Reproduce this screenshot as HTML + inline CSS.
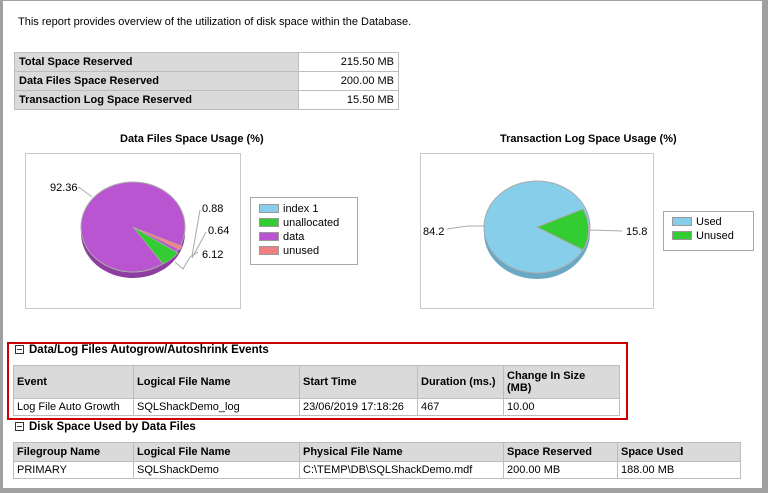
<!DOCTYPE html>
<html><head><meta charset="utf-8"><style>
*{margin:0;padding:0;box-sizing:border-box}
body{width:768px;height:493px;background:#fff;font-family:"Liberation Sans",Arial,sans-serif;font-size:11px;color:#000;position:relative;overflow:hidden}
.frame{position:absolute;left:0;top:0;width:768px;height:493px;border-left:3px solid #a0a0a0;border-top:1px solid #a0a0a0;border-right:6px solid #a0a0a0;border-bottom:5px solid #a0a0a0}
.a{position:absolute;white-space:nowrap}
table{position:absolute;border-collapse:collapse;table-layout:fixed}
td{border:1px solid #bdbdbd;padding:0 4px;height:19px;white-space:nowrap;overflow:hidden}
.s td.l{background:#dadada;font-weight:bold}
.s td.v{text-align:right}
.g th{background:#dadada;border:1px solid #bdbdbd;text-align:left;font-weight:bold;padding:0 3px;white-space:nowrap}
.g td{padding:0 3px;height:17px}
.box{position:absolute;border:1px solid #c8c8c8;background:#fff}
.lg{position:absolute;border:1px solid #a8a8a8;background:#fff;padding:4px 8px;font-size:11px;line-height:14px}
.lg i{display:inline-block;width:20px;height:9px;border:1px solid #999;vertical-align:-1px;margin-right:4px}
.h{font-weight:bold;font-size:11.5px}
.h b{display:inline-block;width:9px;height:9px;border:1px solid #333;position:relative;vertical-align:-1px;margin-right:5px}
.h b:after{content:"";position:absolute;left:1px;right:1px;top:3px;height:1px;background:#333}
</style></head><body>
<div class="frame"></div>
<div class="a" style="left:18px;top:16px">This report provides overview of the utilization of disk space within the Database.</div>
<table class="s" style="left:14px;top:52px;width:384px">
<col style="width:284px"><col style="width:100px">
<tr><td class="l">Total Space Reserved</td><td class="v">215.50 MB</td></tr>
<tr><td class="l">Data Files Space Reserved</td><td class="v">200.00 MB</td></tr>
<tr><td class="l">Transaction Log Space Reserved</td><td class="v">15.50 MB</td></tr>
</table>

<div class="a" style="left:120px;top:133px;font-weight:bold">Data Files Space Usage (%)</div>
<div class="box" style="left:25px;top:153px;width:216px;height:156px"></div>
<svg class="a" style="left:0;top:120px" width="400" height="200" viewBox="0 120 400 200">
<ellipse cx="133" cy="233" rx="52" ry="45" fill="#8e3ea0"/>
<ellipse cx="133" cy="227" rx="52" ry="45" fill="#b955d1" stroke="#aaa" stroke-width="1"/>
<path d="M133 227 L178 253 A52 45 0 0 1 163 264 Z" fill="#33cc33" stroke="#aaa" stroke-width="0.8"/>
<path d="M133 227 L182 246 A52 45 0 0 1 180 250 Z" fill="#e88" stroke="#aaa" stroke-width="0.5"/>
<polyline points="92,197 80,188 76,188" fill="none" stroke="#aaa"/>
<polyline points="192,256 200,210" fill="none" stroke="#aaa"/>
<polyline points="192,258 206,232" fill="none" stroke="#aaa"/>
<polyline points="175,262 183,269 190,257 198,252" fill="none" stroke="#aaa"/>
<text x="50" y="191" font-size="11" font-family="Liberation Sans">92.36</text>
<text x="202" y="212" font-size="11" font-family="Liberation Sans">0.88</text>
<text x="208" y="234" font-size="11" font-family="Liberation Sans">0.64</text>
<text x="202" y="258" font-size="11" font-family="Liberation Sans">6.12</text>
</svg>
<div class="lg" style="left:250px;top:197px;width:108px;height:68px">
<div><i style="background:#87ceeb"></i>index 1</div>
<div><i style="background:#33cc33"></i>unallocated</div>
<div><i style="background:#b955d1"></i>data</div>
<div><i style="background:#f08080"></i>unused</div>
</div>

<div class="a" style="left:500px;top:133px;font-weight:bold">Transaction Log Space Usage (%)</div>
<div class="box" style="left:420px;top:153px;width:234px;height:156px"></div>
<svg class="a" style="left:400px;top:120px" width="368" height="200" viewBox="400 120 368 200">
<ellipse cx="537" cy="233" rx="53" ry="46" fill="#6aa9c6"/>
<ellipse cx="537" cy="227" rx="53" ry="46" fill="#87ceeb" stroke="#aaa"/>
<path d="M537 227 L583 209 A53 46 0 0 1 583 250 Z" fill="#33cc33" stroke="#aaa"/>
<polyline points="447,229 468,226 484,226" fill="none" stroke="#aaa"/>
<polyline points="590,230 622,231" fill="none" stroke="#aaa"/>
<text x="423" y="235" font-size="11" font-family="Liberation Sans">84.2</text>
<text x="626" y="235" font-size="11" font-family="Liberation Sans">15.8</text>
</svg>
<div class="lg" style="left:663px;top:211px;width:91px;height:40px;padding:3px 8px">
<div><i style="background:#87ceeb"></i>Used</div>
<div><i style="background:#33cc33"></i>Unused</div>
</div>

<div class="a" style="left:7px;top:342px;width:621px;height:78px;border:2px solid #c00"></div>
<div class="a h" style="left:15px;top:344px"><b></b>Data/Log Files Autogrow/Autoshrink Events</div>
<table class="g" style="left:13px;top:365px;width:606px">
<col style="width:120px"><col style="width:166px"><col style="width:118px"><col style="width:86px"><col style="width:116px">
<tr style="height:33px"><th>Event</th><th>Logical File Name</th><th>Start Time</th><th>Duration (ms.)</th><th style="line-height:12px">Change In Size<br>(MB)</th></tr>
<tr><td>Log File Auto Growth</td><td>SQLShackDemo_log</td><td>23/06/2019 17:18:26</td><td>467</td><td>10.00</td></tr>
</table>
<div class="a h" style="left:15px;top:421px"><b></b>Disk Space Used by Data Files</div>
<table class="g" style="left:13px;top:442px;width:727px">
<col style="width:120px"><col style="width:166px"><col style="width:204px"><col style="width:114px"><col style="width:123px">
<tr style="height:19px"><th>Filegroup Name</th><th>Logical File Name</th><th>Physical File Name</th><th>Space Reserved</th><th>Space Used</th></tr>
<tr><td>PRIMARY</td><td>SQLShackDemo</td><td>C:\TEMP\DB\SQLShackDemo.mdf</td><td>200.00 MB</td><td>188.00 MB</td></tr>
</table>
</body></html>
